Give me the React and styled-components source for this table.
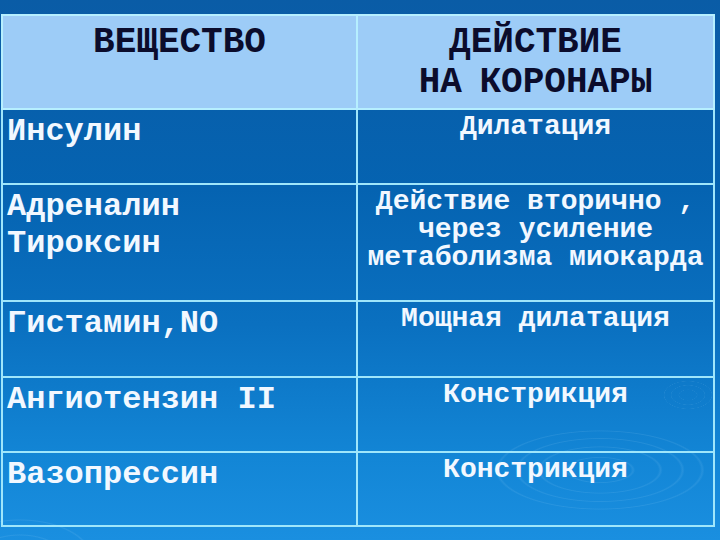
import styled, { createGlobalStyle } from 'styled-components';

const GlobalStyle = createGlobalStyle`
    html, body {
        margin: 0;
        padding: 0;
    }
    body {
        width: 720px;
        height: 540px;
        overflow: hidden;
    }
`;

// faint water ripples painted into the slide background
const ring = (x, y, rx, ry, stops) =>
    `radial-gradient(ellipse ${rx}px ${ry}px at ${x}px ${y}px, ${stops
        .map((s) => `transparent ${s - 2}%, rgba(190, 230, 255, 0.1) ${s}%, transparent ${s + 2}%`)
        .join(', ')}, transparent 100%)`;

const Slide = styled.div`
    width: 720px;
    height: 540px;
    box-sizing: border-box;
    padding: 14px 7px 0 1px;
    background-image: ${ring(600, 470, 110, 42, [30, 55, 75, 93])},
        ${ring(688, 395, 26, 15, [35, 65, 92])},
        ${ring(20, 560, 90, 50, [50, 80])},
        linear-gradient(180deg, #0a5ca6 0%, #0563b1 35%, #0a70c0 60%, #1386d6 85%, #1a8fe0 100%);
    font-family: 'Liberation Mono', 'Courier New', monospace;
    font-weight: bold;
`;

const Table = styled.table`
    width: 712px;
    border-collapse: collapse;
    table-layout: fixed;
    border: 2px solid #c4f2ff;
`;

const HeadCell = styled.th`
    height: ${(p) => p.$h}px;
    box-sizing: border-box;
    padding: 7px 0 0;
    vertical-align: top;
    text-align: center;
    background: #9dccf7;
    border: 2px solid #b6efff;
    color: #0b0c2c;
    font-size: 36px;
    line-height: 40px;
    font-weight: bold;
    word-spacing: -4px;
`;

const NameCell = styled.td`
    height: ${(p) => p.$h}px;
    box-sizing: border-box;
    padding: 3px 0 0 4px;
    vertical-align: top;
    border: 2px solid #9fe6fb;
    color: #f2f8ff;
    font-size: 32px;
    line-height: 37px;
    white-space: pre;
`;

const EffectCell = styled.td`
    box-sizing: border-box;
    padding: 3px 0 0;
    vertical-align: top;
    text-align: center;
    border: 2px solid #9fe6fb;
    color: #f2f8ff;
    font-size: 28px;
    line-height: 28px;
    white-space: pre;
`;

const rows = [
    { name: 'Инсулин', effect: 'Дилатация', h: 75 },
    { name: 'Адреналин\nТироксин', effect: 'Действие вторично ,\nчерез усиление\nметаболизма миокарда', h: 117 },
    { name: 'Гистамин,NO', effect: 'Мощная дилатация', h: 76 },
    { name: 'Ангиотензин II', effect: 'Констрикция', h: 75 },
    { name: 'Вазопрессин', effect: 'Констрикция', h: 74 },
];

export default function App() {
    return (
        <>
            <GlobalStyle />
            <Slide>
                <Table>
                    <colgroup>
                        <col style={{ width: 355 }} />
                        <col style={{ width: 357 }} />
                    </colgroup>
                    <thead>
                        <tr>
                            <HeadCell $h={94}>ВЕЩЕСТВО</HeadCell>
                            <HeadCell $h={94}>
                                ДЕЙСТВИЕ
                                <br />
                                НА КОРОНАРЫ
                            </HeadCell>
                        </tr>
                    </thead>
                    <tbody>
                        {rows.map((r) => (
                            <tr key={r.name}>
                                <NameCell $h={r.h}>{r.name}</NameCell>
                                <EffectCell>{r.effect}</EffectCell>
                            </tr>
                        ))}
                    </tbody>
                </Table>
            </Slide>
        </>
    );
}
